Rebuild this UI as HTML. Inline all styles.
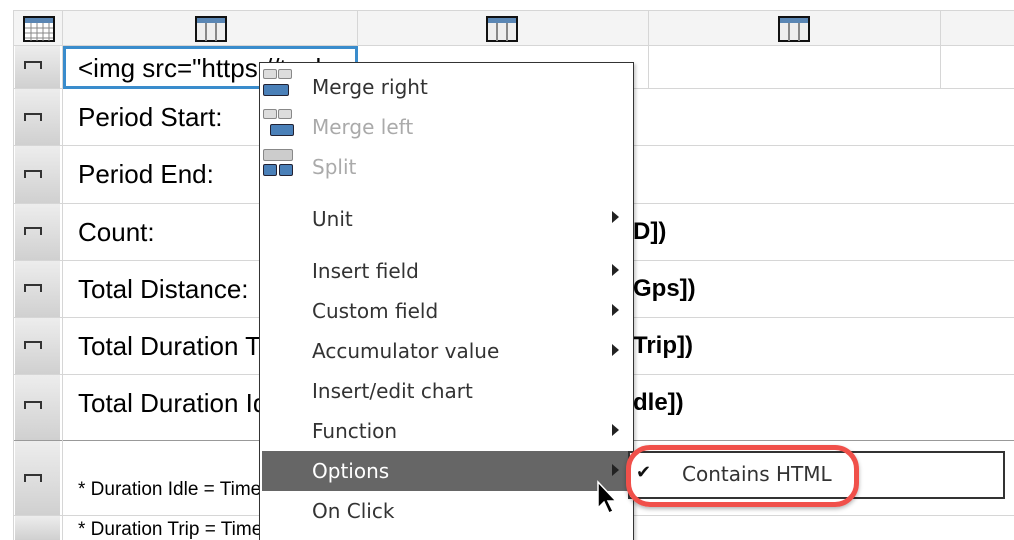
<!DOCTYPE html>
<html style="overflow:hidden;height:540px"><head><style>
body{margin:0;width:1014px;height:540px;overflow:hidden;background:#fff;position:relative;font-family:"Liberation Sans",Arial,sans-serif}
.a{position:absolute}
.h{position:absolute;height:1px;background:#d6d6d6;left:13px;right:0}
.v{position:absolute;width:1px;background:#d6d6d6;top:10px;bottom:0}
.rh{position:absolute;left:15px;width:45px;background:linear-gradient(#ededed,#d0d0d0)}
.br{position:absolute;left:24px;width:18px;height:8px;border:2px solid #333;border-bottom:none;box-sizing:border-box}
.lbl{position:absolute;left:78px;font-size:26px;color:#000;white-space:nowrap}
.bold{position:absolute;left:633px;font-size:24px;font-weight:bold;color:#000}
.mi{position:absolute;left:312px;font-family:"DejaVu Sans",Verdana,sans-serif;font-size:20px;color:#333;white-space:nowrap}
.dis{color:#aaa}
.ar{position:absolute;left:612px;width:0;height:0;border-left:7px solid #222;border-top:6px solid transparent;border-bottom:6px solid transparent}
.ci{position:absolute;width:12px;height:8px;border:1px solid #888;border-radius:2px;background:#ddd}
.cb{position:absolute;height:10px;border:1px solid #223;border-radius:2px;background:#4a80b8}
</style></head><body>
<div class="a" style="left:13px;top:10px;right:0;height:35px;background:#f4f4f4"></div>
<div class="h" style="top:10px"></div><div class="h" style="top:45px"></div>
<div class="h" style="top:88px"></div><div class="h" style="top:145px"></div>
<div class="h" style="top:203px"></div><div class="h" style="top:260px"></div>
<div class="h" style="top:317px"></div><div class="h" style="top:374px"></div>
<div class="h" style="top:440px;background:#999"></div><div class="h" style="top:515px"></div>
<div class="v" style="left:13px"></div><div class="v" style="left:62px"></div>
<div class="v" style="left:357px;height:78px"></div><div class="v" style="left:648px;height:78px"></div><div class="v" style="left:940px;height:78px"></div>
<svg class="a" style="left:23px;top:16px" width="32" height="26"><rect x="1" y="1" width="30" height="24" fill="#fff" stroke="#111" stroke-width="2"/><rect x="2" y="2" width="28" height="5" fill="#5a86b4"/><path d="M2 12H30M2 17H30M2 22H30M8 7V25M14 7V25M20 7V25M26 7V25" stroke="#888"/></svg>
<svg class="a" style="left:195px;top:16px" width="32" height="26"><rect x="1" y="1" width="30" height="24" fill="#eee" stroke="#111" stroke-width="2"/><rect x="2" y="2" width="28" height="5" fill="#5a86b4"/><path d="M11 7V25M21 7V25" stroke="#888" stroke-width="2"/></svg>
<svg class="a" style="left:486px;top:16px" width="32" height="26"><rect x="1" y="1" width="30" height="24" fill="#eee" stroke="#111" stroke-width="2"/><rect x="2" y="2" width="28" height="5" fill="#5a86b4"/><path d="M11 7V25M21 7V25" stroke="#888" stroke-width="2"/></svg>
<svg class="a" style="left:778px;top:16px" width="32" height="26"><rect x="1" y="1" width="30" height="24" fill="#eee" stroke="#111" stroke-width="2"/><rect x="2" y="2" width="28" height="5" fill="#5a86b4"/><path d="M11 7V25M21 7V25" stroke="#888" stroke-width="2"/></svg>
<div class="rh" style="top:46px;height:42px"></div><div class="br" style="top:61px"></div>
<div class="rh" style="top:89px;height:56px"></div><div class="br" style="top:113px"></div>
<div class="rh" style="top:146px;height:57px"></div><div class="br" style="top:170px"></div>
<div class="rh" style="top:204px;height:56px"></div><div class="br" style="top:227px"></div>
<div class="rh" style="top:261px;height:56px"></div><div class="br" style="top:284px"></div>
<div class="rh" style="top:318px;height:56px"></div><div class="br" style="top:341px"></div>
<div class="rh" style="top:375px;height:65px"></div><div class="br" style="top:401px"></div>
<div class="rh" style="top:441px;height:74px"></div><div class="br" style="top:474px"></div>
<div class="rh" style="top:516px;height:24px"></div>
<div class="a" style="left:63px;top:46px;width:289px;height:37px;border:3px solid #3a8ccc"></div>
<div class="lbl" style="top:53px">&lt;img src="https://tool</div>
<div class="lbl" style="top:102px">Period Start:</div>
<div class="lbl" style="top:159px">Period End:</div>
<div class="lbl" style="top:217px">Count:</div>
<div class="lbl" style="top:274px">Total Distance:</div>
<div class="lbl" style="top:331px">Total Duration Trip:</div>
<div class="lbl" style="top:388px">Total Duration Idle:</div>
<div class="bold" style="top:218px">D])</div>
<div class="bold" style="top:275px">Gps])</div>
<div class="bold" style="top:332px">Trip])</div>
<div class="bold" style="top:389px">dle])</div>
<div class="a" style="left:78px;top:479px;font-size:19px;white-space:nowrap">* Duration Idle = Time that a vehicle is idle</div>
<div class="a" style="left:78px;top:519px;font-size:19px;white-space:nowrap">* Duration Trip = Time that a vehicle is online and moving.</div>
<div class="a" style="left:259px;top:62px;width:373px;height:490px;background:#fff;border:1px solid #333;box-shadow:2px 2px 3px rgba(0,0,0,.2)"></div>
<div class="a" style="left:262px;top:451px;width:366px;height:40px;background:#666"></div>
<div class="ci" style="left:263px;top:69px"></div><div class="ci" style="left:278px;top:69px"></div><div class="cb" style="left:263px;top:84px;width:24px"></div>
<div class="ci" style="left:263px;top:109px"></div><div class="ci" style="left:278px;top:109px"></div><div class="cb" style="left:270px;top:124px;width:22px"></div>
<div class="a" style="left:263px;top:149px;width:28px;height:10px;border:1px solid #888;border-radius:2px;background:#ccc"></div><div class="cb" style="left:263px;top:164px;width:12px"></div><div class="cb" style="left:279px;top:164px;width:12px"></div>
<div class="mi" style="top:75px">Merge right</div>
<div class="mi dis" style="top:115px">Merge left</div>
<div class="mi dis" style="top:155px">Split</div>
<div class="mi" style="top:207px">Unit</div><div class="ar" style="top:211px"></div>
<div class="mi" style="top:259px">Insert field</div><div class="ar" style="top:264px"></div>
<div class="mi" style="top:299px">Custom field</div><div class="ar" style="top:304px"></div>
<div class="mi" style="top:339px">Accumulator value</div><div class="ar" style="top:344px"></div>
<div class="mi" style="top:379px">Insert/edit chart</div>
<div class="mi" style="top:419px">Function</div><div class="ar" style="top:424px"></div>
<div class="mi" style="top:459px;color:#fff">Options</div><div class="ar" style="top:464px"></div>
<div class="mi" style="top:499px">On Click</div>
<div class="a" style="left:628px;top:451px;width:373px;height:44px;border:2px solid #333;background:#fff"></div>
<div class="a" style="left:626px;top:445px;width:223px;height:52px;border:5px solid #f0504a;border-radius:24px;box-shadow:0 2px 4px rgba(0,0,0,.3)"></div>
<div class="a" style="left:636px;top:462px;font-size:18px;color:#111">✔</div>
<div class="mi" style="left:682px;top:462px">Contains HTML</div>
<svg class="a" style="left:595px;top:480px" width="24" height="38"><path d="M3 2V28L9 22L14 33L18 31L13 21H21Z" fill="#000" stroke="#fff" stroke-width="1.5"/></svg>
</body></html>
